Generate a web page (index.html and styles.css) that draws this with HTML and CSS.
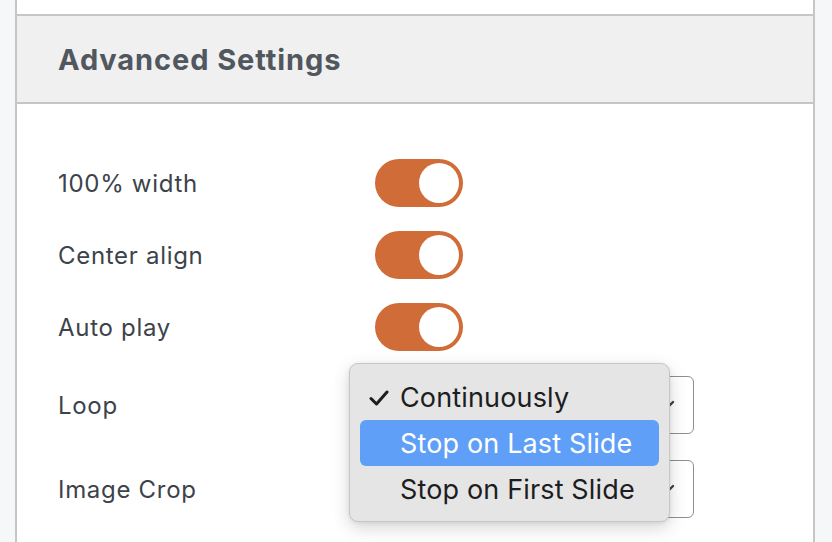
FILE: index.html
```html
<!DOCTYPE html>
<html lang="en">
<head>
<meta charset="utf-8">
<title>Advanced Settings</title>
<link rel="stylesheet" href="styles.css">
</head>
<body>
<div class="panel">
  <div class="top-space"></div>
  <div class="header">
    <h2 class="title">Advanced Settings</h2>
  </div>
  <div class="settings">
    <div class="row toggle-row">
      <div class="label">100% width</div>
      <div class="control"><span class="toggle"><span class="knob"></span></span></div>
    </div>
    <div class="row toggle-row">
      <div class="label">Center align</div>
      <div class="control"><span class="toggle"><span class="knob"></span></span></div>
    </div>
    <div class="row toggle-row">
      <div class="label">Auto play</div>
      <div class="control"><span class="toggle"><span class="knob"></span></span></div>
    </div>
    <div class="row select-row">
      <div class="label">Loop</div>
      <div class="control">
        <div class="select">
          <span class="select-text"></span>
          <svg class="chevron" viewBox="0 0 16 10" width="16" height="10"><path d="M2 2 L8 8 L14 2" fill="none" stroke="#3c434a" stroke-width="2.4" stroke-linecap="round" stroke-linejoin="round"/></svg>
          <div class="menu">
            <div class="item checked">
              <svg class="check" viewBox="0 0 20 16" width="20" height="16"><path d="M2 8.5 L7.5 14 L18 2" fill="none" stroke="#1d1d1f" stroke-width="3" stroke-linecap="round" stroke-linejoin="round"/></svg>
              <span>Continuously</span>
            </div>
            <div class="item active"><span>Stop on Last Slide</span></div>
            <div class="item"><span>Stop on First Slide</span></div>
          </div>
        </div>
      </div>
    </div>
    <div class="row select-row">
      <div class="label">Image Crop</div>
      <div class="control">
        <div class="select">
          <span class="select-text"></span>
          <svg class="chevron" viewBox="0 0 16 10" width="16" height="10"><path d="M2 2 L8 8 L14 2" fill="none" stroke="#3c434a" stroke-width="2.4" stroke-linecap="round" stroke-linejoin="round"/></svg>
        </div>
      </div>
    </div>
  </div>
</div>
</body>
</html>
```

FILE: styles.css
```css
html, body {
  margin: 0;
  padding: 0;
}
body {
  background: #f5f7f9;
  font-family: Inter, "Noto Sans", "Liberation Sans", sans-serif;
  height: 542px;
  overflow: hidden;
}
.panel {
  margin-left: 15px;
  width: 796px;
  background: #fff;
  border-left: 2px solid #c5c6c8;
  border-right: 2px solid #c5c6c8;
  min-height: 542px;
}
.top-space {
  height: 14px;
}
.header {
  height: 86px;
  background: #f0f0f0;
  border-top: 2px solid #c5c6c8;
  border-bottom: 2px solid #c5c6c8;
  display: flex;
  align-items: center;
  padding-left: 41px;
}
.title {
  margin: 0;
  font-size: 29px;
  font-weight: 700;
  color: #50575e;
  letter-spacing: 0.9px;
}
.settings {
  padding: 55px 0 0 41px;
  display: flex;
  flex-direction: column;
  gap: 24px;
}
.row {
  display: flex;
  align-items: center;
}
.toggle-row {
  height: 48px;
}
.select-row {
  height: 60px;
}
.label {
  width: 317px;
  font-size: 24px;
  letter-spacing: 0.7px;
  color: #3c434a;
}
.control {
  display: flex;
  align-items: center;
}
.toggle {
  width: 88px;
  height: 48px;
  border-radius: 24px;
  background: #d06c37;
  display: flex;
  align-items: center;
  justify-content: flex-end;
  padding-right: 4px;
  box-sizing: border-box;
}
.knob {
  width: 40px;
  height: 40px;
  border-radius: 50%;
  background: #fff;
}
.select {
  position: relative;
  width: 319px;
  height: 58px;
  box-sizing: border-box;
  border: 1px solid #8c8f94;
  border-radius: 6px;
  background: #fff;
  display: flex;
  align-items: center;
  padding: 0 20px;
  font-size: 24px;
  color: #2c3338;
}
.select-text {
  flex: 1;
}
.chevron {
  margin-right: -2px;
}
.menu {
  position: absolute;
  left: -27px;
  top: -14px;
  width: 321px;
  box-sizing: border-box;
  padding: 10px 10px 9px 10px;
  background: #e5e5e5;
  border: 1px solid #c6c6c6;
  border-radius: 9px;
  box-shadow: 0 6px 18px rgba(0, 0, 0, 0.16), 0 1px 4px rgba(0, 0, 0, 0.08);
  z-index: 2;
}
.item {
  position: relative;
  height: 46px;
  display: flex;
  align-items: center;
  padding-left: 40px;
  font-size: 27px;
  letter-spacing: 0.15px;
  color: #1d1d1f;
  border-radius: 6px;
}
.item.active {
  background: #5f9ff7;
  color: #fff;
}
.check {
  position: absolute;
  left: 9px;
  top: 16px;
}
```
